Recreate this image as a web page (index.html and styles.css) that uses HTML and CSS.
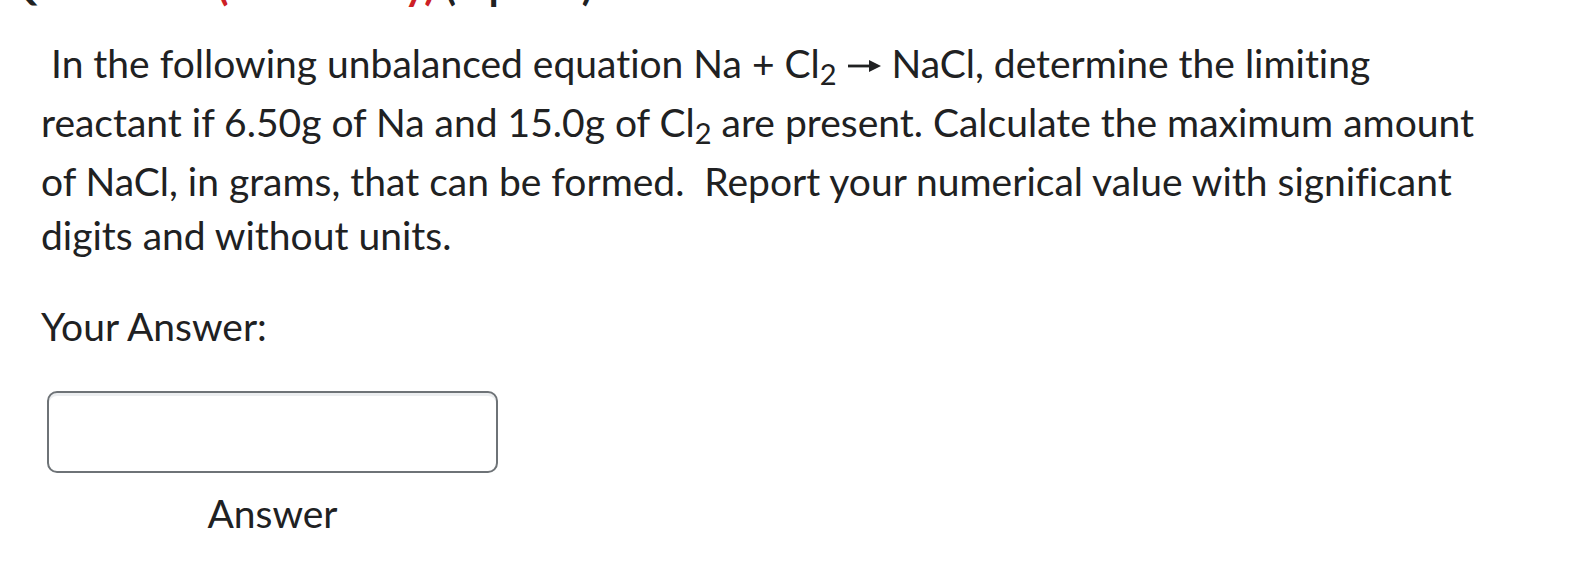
FILE: index.html
```html
<!DOCTYPE html>
<html lang="en">
<head>
<meta charset="utf-8">
<title>Question</title>
<link rel="stylesheet" href="styles.css">
</head>
<body>
<main class="page">
  <h2 class="qhead">Question 3 <span class="req">(Mandatory)</span> (1 point)</h2>
  <div class="qtext">In the following unbalanced equation Na + Cl<sub>2</sub> <svg class="arrow" width="35" height="16" viewBox="0 0 35 16" aria-hidden="true"><rect x="1" y="6.6" width="23" height="2.8" fill="currentColor"/><path d="M22 2 L34 8 L22 14 Z" fill="currentColor"/></svg> NaCl, determine the limiting reactant if 6.50g of Na and 15.0g of Cl<sub>2</sub> are present. Calculate the maximum amount of NaCl, in grams, that can be formed.&nbsp; Report your numerical value with significant digits and without units.</div>
  <div class="your-answer">Your Answer:</div>
  <div class="field-wrap">
    <input class="field" type="text" aria-label="Answer">
    <div class="field-caption">Answer</div>
  </div>
</main>
</body>
</html>
```
FILE: styles.css
```css
html, body {
  margin: 0;
  padding: 0;
  background: #ffffff;
}
body {
  font-family: Lato, "Noto Sans", sans-serif;
  color: #202122;
  overflow: hidden;
}
.page {
  padding-left: 41px;
  display: flex;
  flex-direction: column;
  align-items: flex-start;
}
.qhead {
  margin: -35px 0 0 -36px;
  font-size: 40px;
  font-weight: 700;
  line-height: 40px;
  white-space: nowrap;
}
.req {
  color: #cd2026;
  margin-left: 5px;
}
.qtext {
  margin-top: 31px;
  width: 1447px;
  font-size: 39px;
  line-height: 54px;
  text-indent: 10px;
  font-variant-ligatures: none;
}
.qtext sub {
  font-size: 29px;
  line-height: 43px;
  vertical-align: -7px;
}
.arrow {
  vertical-align: middle;
  position: relative;
  top: -2px;
}
.your-answer {
  margin-top: 39px;
  font-size: 39px;
  line-height: 50px;
}
.field-wrap {
  margin-top: 40px;
  margin-left: 6px;
  display: flex;
  flex-direction: column;
  align-items: center;
}
.field {
  box-sizing: border-box;
  width: 451px;
  height: 82px;
  border: 2px solid #6e7377;
  border-radius: 10px;
  background: #fff;
  box-shadow: inset 0 3px 0 #eceef0;
  margin: 0;
  padding: 0 16px;
  font: inherit;
  font-size: 30px;
}
.field-caption {
  margin-top: 15px;
  font-size: 39px;
  line-height: 50px;
}
```
